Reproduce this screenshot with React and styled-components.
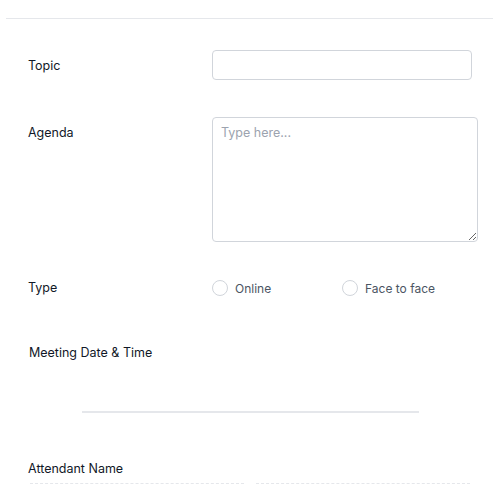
import styled, { createGlobalStyle } from "styled-components";

const GlobalStyle = createGlobalStyle`
  body {
    margin: 0;
    background: #ffffff;
    font-family: Inter, "Noto Sans", sans-serif;
    color: #1f2937;
  }
  * { box-sizing: border-box; }
`;

const Page = styled.div`
  width: 500px;
  height: 484px;
  overflow: hidden;
  padding-top: 18px;
`;

const TopRule = styled.hr`
  margin: 0 7px 0 6px;
  border: 0;
  border-top: 1px solid #e5e7eb;
`;

const Form = styled.form`
  padding: 0 28px;
  display: flex;
  flex-direction: column;
`;

const Row = styled.div`
  display: grid;
  grid-template-columns: 184px 1fr;
  align-items: ${(p) => (p.$top ? "start" : "center")};
  margin-top: ${(p) => p.$gap}px;
`;

const Label = styled.label`
  font-size: 12.5px;
  font-weight: 400;
  line-height: 16px;
  color: #111827;
  padding-top: ${(p) => p.$pad || 0}px;
  padding-left: ${(p) => p.$indent || 0}px;
`;

const TextInput = styled.input`
  width: 260px;
  height: 30px;
  border: 1px solid #d1d5db;
  border-radius: 4px;
  outline: none;
  font: inherit;
  font-size: 13px;
  padding: 0 9px;
`;

const TextArea = styled.textarea`
  width: 266px;
  height: 125px;
  border: 1px solid #d1d5db;
  border-radius: 4px;
  outline: none;
  font-family: Inter, "Noto Sans", sans-serif;
  font-size: 12.5px;
  padding: 7px 8px;
  resize: vertical;
  color: #1f2937;

  &::placeholder {
    color: #9ca3af;
  }
`;

const RadioGroup = styled.div`
  display: grid;
  grid-template-columns: 130px 1fr;
  align-items: center;
`;

const RadioOption = styled.label`
  display: flex;
  align-items: center;
  gap: 7px;
  font-size: 12px;
  color: #4b5563;
`;

const RadioCircle = styled.span`
  width: 16px;
  height: 16px;
  border: 1px solid #d1d5db;
  border-radius: 50%;
  background: #fff;
`;

const Section = styled.div`
  margin-top: ${(p) => p.$gap}px;
`;

const Separator = styled.div`
  width: 337px;
  height: 2px;
  margin: 50px auto 0;
  background: #e5e7eb;
`;

const FieldPair = styled.div`
  display: grid;
  grid-template-columns: 214px 214px;
  gap: 12px;
  margin-top: 6px;
  padding-left: 2px;
`;

const FieldStub = styled.div`
  height: 20px;
  border-top: 1px dashed #e5e7eb;
`;

export default function App() {
  return (
    <>
      <GlobalStyle />
      <Page>
        <TopRule />
        <Form>
          <Row $gap={31}>
            <Label $pad={1}>Topic</Label>
            <TextInput type="text" />
          </Row>
          <Row $gap={37} $top>
            <Label $pad={8}>Agenda</Label>
            <TextArea placeholder="Type here..." />
          </Row>
          <Row $gap={38}>
            <Label>Type</Label>
            <RadioGroup>
              <RadioOption>
                <RadioCircle />
                Online
              </RadioOption>
              <RadioOption>
                <RadioCircle />
                Face to face
              </RadioOption>
            </RadioGroup>
          </Row>
          <Section $gap={45}>
            <Label $indent={1}>Meeting Date &amp; Time</Label>
          </Section>
          <Separator />
          <Section $gap={44}>
            <Label>Attendant Name</Label>
          </Section>
          <FieldPair>
            <FieldStub />
            <FieldStub />
          </FieldPair>
        </Form>
      </Page>
    </>
  );
}
